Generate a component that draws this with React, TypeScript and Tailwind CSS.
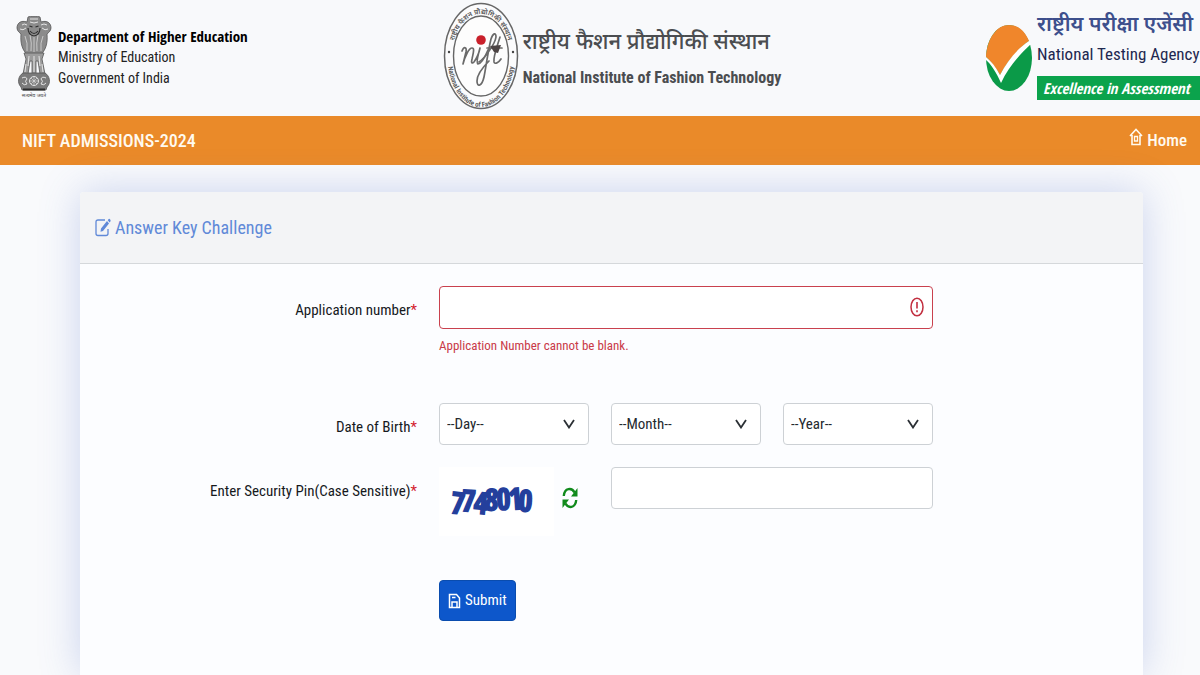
import { useState } from 'react';
import type { ReactNode } from 'react';

function Emblem() {
  return (
    <svg viewBox="0 0 36 82" className="h-[82px] w-9 shrink-0" role="img" aria-label="State Emblem of India">
      <g fill="#8b8b8b" stroke="#555" strokeWidth="0.8" strokeLinejoin="round">
        <path d="M12 1 C14 0 22 0 24 1 L25 6 C31 4 35 7 35 12 C35 15 32 17 31 18 C32 28 29 35 25 38 L11 38 C7 35 4 28 5 18 C4 17 1 15 1 12 C1 7 5 4 11 6 Z" />
        <path d="M8 37 L28 37 L26 43 L29 58 L24 58 L22 45 L20 45 L20 58 L16 58 L16 45 L14 45 L12 58 L7 58 L10 43 Z" fill="#9c9c9c" />
        <path d="M7 57 L29 57 C34 60 35 67 31 71 L30 74 L6 74 L5 71 C1 67 2 60 7 57 Z" fill="#7b7b7b" />
      </g>
      <g fill="none" stroke="#e4e4e4" strokeWidth="1">
        <path d="M14 3 L22 3 M14 6 Q18 8 22 6 M6 9 Q8 7 11 9 M25 9 Q28 7 31 9 M4 13 Q7 15 10 12 M32 13 Q29 15 26 12" />
        <path d="M9 20 Q12 27 11 35 M14 19 Q16 27 15 35 M22 19 Q20 27 21 35 M27 20 Q24 27 25 35 M18 20 V36" strokeWidth="0.7" />
        <path d="M10 48 L9 56 M13 40 L12 50 M18 40 V56 M23 40 L24 50 M26 48 L27 56" />
        <circle cx="18" cy="65" r="4.5" />
        <path d="M18 60.500 V69.500 M13.500 65 H22.500 M15 62 L21 68 M21 62 L15 68" strokeWidth="0.6" />
        <path d="M6 62 Q10 60 11 63 Q8 65 11 68 Q8 70 6 67 M30 62 Q26 60 25 63 Q28 65 25 68 Q28 70 30 67" />
      </g>
      <g fill="none" stroke="#2c2c2c" strokeWidth="1.100">
        <path d="M13.500 10 L16.500 11 M22.500 10 L19.500 11 M14 15 Q18 20 22 15 M12 12 Q12 19 18 20 Q24 19 24 12" />
        <path d="M7 73.500 H29" strokeWidth="2" />
      </g>
      <text x="18" y="81" textAnchor="middle" fontSize="5" fill="#444" fontFamily="Noto Sans Devanagari, Noto Sans, sans-serif">सत्यमेव जयते</text>
    </svg>
  );
}

function NiftSeal() {
  return (
    <svg viewBox="0 0 76 108" className="h-[108px] w-[76px] shrink-0" role="img" aria-label="NIFT">
      <defs>
        <path id="seal-top" d="M8.500 57 A29.500 45 0 0 1 67.500 57" />
        <path id="seal-bottom" d="M4.500 56 A33.500 49 0 0 0 71.500 56" />
      </defs>
      <ellipse cx="38" cy="54" rx="36.500" ry="52.500" fill="#fbfbfc" stroke="#666" strokeWidth="1.500" />
      <ellipse cx="38" cy="54" rx="27.500" ry="40" fill="#fdfdfd" stroke="#666" strokeWidth="1.400" />
      <text fontSize="7" fontWeight="600" fill="#555" fontFamily="Noto Sans Devanagari, Noto Sans, sans-serif">
        <textPath href="#seal-top" startOffset="50%" textAnchor="middle">राष्ट्रीय फैशन प्रौद्योगिकी संस्थान</textPath>
      </text>
      <text fontSize="7" fontWeight="600" fill="#555" fontFamily="Roboto Condensed, sans-serif">
        <textPath href="#seal-bottom" startOffset="50%" textAnchor="middle">National Institute of Fashion Technology</textPath>
      </text>
      <circle cx="6" cy="50" r="1.200" fill="#444" />
      <circle cx="70" cy="50" r="1.200" fill="#444" />
      <g fill="none" stroke="#6a6a6a" strokeWidth="1.700" strokeLinecap="round" strokeLinejoin="round">
        <path d="M19 49 C21 44 24 45 23 50 L20 62 C22 54 26 46 29 46 C32 46 30 52 29 57 C28 61 29 62 31 60 C34 56 36 51 37 46 C35 53 33 61 35 62 C38 62 42 55 45 48" />
        <path d="M36 60 C42 56 52 42 53 35 C53 30 50 31 48 37 C45 49 43 65 41 75 C39 84 34 86 34 79 C34 72 41 64 46 59" />
        <path d="M57 35 C54 45 50 55 51 60 C52 63 56 60 58 57 M44 46 H59" />
      </g>
      <path d="M47 44 L58 43 L55 51 L51 50 Z" fill="#4c4444" />
      <circle cx="38" cy="38" r="4.800" fill="#c9202b" />
    </svg>
  );
}

function NtaMark() {
  return (
    <svg viewBox="0 0 48 68" className="h-[68px] w-12 shrink-0" aria-hidden="true">
      <ellipse cx="24" cy="34" rx="23" ry="33" fill="#0b9a48" />
      <path d="M1 33 C2 14 12 1 24 1 C33 1 40 7 44 17 C34 24 22 37 15 51 C10 42 5 37 1 33 Z" fill="#f0862b" />
      <path d="M1 33 C6 37 11 43 15 51 C22 37 33 24 44 17 L46 20 C34 31 23 44 16 59 C11 48 6 40 1 36 Z" fill="#fff" />
    </svg>
  );
}

function Captcha() {
  return (
    <svg viewBox="0 0 115 69" className="h-[69px] w-[115px] shrink-0 bg-white" role="img" aria-label="Security pin">
      <text
        x="11 22 34 45 58 70 79"
        y="46 44 46 43 43 43 44"
        rotate="6 4 6 3 -2 -4 3"
        fontSize="30"
        fontWeight="800"
        fontFamily="Open Sans Condensed, Open Sans, sans-serif"
        fill="#243f9c"
        stroke="#243f9c"
        strokeWidth="1.500"
      >
        7748010
      </text>
    </svg>
  );
}

function Label({ htmlFor, children }: { htmlFor: string; children: ReactNode }) {
  return (
    <label htmlFor={htmlFor} className="col-span-2 pt-3 text-right text-[15px] leading-6 text-[#16191d]">
      {children}
      <span className="text-[#d3222f]">*</span>
    </label>
  );
}

function Picker({ id, label, count, start }: { id: string; label: string; count: number; start: number }) {
  return (
    <div className="relative">
      <select
        id={id}
        aria-label={label}
        className="h-[42px] w-full appearance-none rounded border border-[#cdd1d5] bg-white px-[7px] text-[15px] text-[#24292e]"
      >
        <option>--{label}--</option>
        {Array.from({ length: count }, (_, i) => (
          <option key={i}>{start + i}</option>
        ))}
      </select>
      <svg viewBox="0 0 12 10" className="pointer-events-none absolute top-4 right-[14px] h-[10px] w-3" aria-hidden="true">
        <path d="M1 1 L6 8.500 L11 1" fill="none" stroke="#2b3035" strokeWidth="1.800" />
      </svg>
    </div>
  );
}

export default function App() {
  const [appNo, setAppNo] = useState('');
  return (
    <div className="flex min-h-screen flex-col overflow-hidden bg-[#f9fafc] font-['Roboto_Condensed',Roboto,sans-serif]">
      <header className="flex h-[116px] shrink-0 items-start justify-between bg-[#f8f9fb]">
        <div className="flex flex-1 gap-[6px] pt-4 pl-4">
          <Emblem />
          <div className="pt-[10px] text-sm leading-[21px] whitespace-nowrap text-[#222]">
            <p className="font-['Open_Sans_Condensed','Open_Sans',sans-serif] text-[15px] leading-[21px] font-bold text-black">
              Department of Higher Education
            </p>
            <p>Ministry of Education</p>
            <p>Government of India</p>
          </div>
        </div>
        <div className="flex gap-1 pt-[2px] pl-2 whitespace-nowrap text-[#4b4d50]">
          <NiftSeal />
          <div className="pt-6">
            <p className="font-['Noto_Sans_Devanagari','Noto_Sans',sans-serif] text-[22px] leading-9 font-medium">राष्ट्रीय फैशन प्रौद्योगिकी संस्थान</p>
            <p className="text-base leading-8 font-bold">National Institute of Fashion Technology</p>
          </div>
        </div>
        <div className="flex flex-1 justify-end gap-1 whitespace-nowrap">
          <div className="pt-6">
            <NtaMark />
          </div>
          <div className="w-[163px] pt-3">
            <p className="font-['Noto_Sans_Devanagari','Noto_Sans',sans-serif] text-[21px] leading-7 font-semibold text-[#3d4f8c]">राष्ट्रीय परीक्षा एजेंसी</p>
            <p className="text-[17px] leading-7 text-[#1e2850]">National Testing Agency</p>
            <p className="mt-2 bg-[#0ba34c] pl-[6px] font-['Open_Sans_Condensed','Open_Sans',sans-serif] text-[15px] leading-6 font-bold text-white italic">
              Excellence in Assessment
            </p>
          </div>
        </div>
      </header>

      <nav className="flex h-[49px] shrink-0 items-center justify-between bg-[#ea8a29] pr-[13px] pl-[22px] text-[#fffaf0]">
        <h1 className="text-lg font-medium">NIFT ADMISSIONS-2024</h1>
        <a href="#home" className="flex items-center gap-1 text-[17px] font-medium">
          <svg viewBox="0 0 14 18" className="mb-2 h-[18px] w-[14px]" aria-hidden="true">
            <path d="M1 8 L7 1.500 L13 8 M3 7 V16.500 H11 V7" fill="none" stroke="currentColor" strokeWidth="1.600" />
            <path d="M5.500 8.500 H8.500 V13 H5.500 Z" fill="none" stroke="currentColor" strokeWidth="1.300" />
          </svg>
          Home
        </a>
      </nav>

      <main className="mt-[27px] mr-[57px] ml-20 flex-1 rounded-t bg-[#fcfdff] shadow-[0_0_40px_rgba(82,112,200,0.28)]">
        <h2 className="flex h-[72px] items-center gap-1 rounded-t border-b border-[#d5d8db] bg-[#f3f4f6] pl-[15px] text-lg text-[#6089d8]">
          <svg viewBox="0 0 16 19" className="h-[19px] w-4" aria-hidden="true">
            <path d="M10 2 H3 Q1 2 1 4 V15.500 Q1 17.500 3 17.500 H11 Q13 17.500 13 15.500 V11" fill="none" stroke="currentColor" strokeWidth="1.300" />
            <path d="M6 10.500 L12 3 L14 5.500 L8 13 L5.500 13.800 Z M12.700 2.200 L13.700 1 Q14.500 0.500 15.200 1.500 Q16 2.500 15.400 3.400 L14.600 4.600 Z" fill="currentColor" />
          </svg>
          Answer Key Challenge
        </h2>

        <form className="pt-[22px] pr-[38px] pb-[54px] pl-[15px]" onSubmit={(e) => e.preventDefault()}>
          <div className="grid grid-cols-6 gap-x-[22px]">
            <Label htmlFor="application-number">Application number</Label>
            <div className="col-span-3 h-[117px]">
              <div className="relative">
                <input
                  id="application-number"
                  value={appNo}
                  onChange={(e) => setAppNo(e.target.value)}
                  aria-invalid="true"
                  aria-describedby="application-number-error"
                  className="block h-[43px] w-full rounded border border-[#c9414e] bg-white pr-9 pl-2 text-base outline-none"
                />
                <svg viewBox="0 0 14 20" className="pointer-events-none absolute top-[11px] right-[9px] h-5 w-[14px]" aria-hidden="true">
                  <ellipse cx="7" cy="10" rx="6" ry="8.800" fill="none" stroke="#c22f40" strokeWidth="1.500" />
                  <path d="M7 5 V11.500 M7 13.300 V15.300" stroke="#c22f40" strokeWidth="1.600" />
                </svg>
              </div>
              <p id="application-number-error" className="pt-[5px] text-[13px] leading-6 text-[#c93a48]">
                Application Number cannot be blank.
              </p>
            </div>
          </div>

          <div className="grid h-16 grid-cols-6 gap-x-[22px]">
            <Label htmlFor="birth-day">Date of Birth</Label>
            <Picker id="birth-day" label="Day" count={31} start={1} />
            <Picker id="birth-month" label="Month" count={12} start={1} />
            <Picker id="birth-year" label="Year" count={60} start={1950} />
          </div>

          <div className="grid h-[113px] grid-cols-6 gap-x-[22px]">
            <Label htmlFor="security-pin">Enter Security Pin(Case Sensitive)</Label>
            <div className="flex items-start gap-2">
              <Captcha />
              <button type="button" aria-label="Refresh security pin" className="mt-5 shrink-0 text-[#118a1c]">
                <svg viewBox="0 0 16 22" className="h-[22px] w-4" aria-hidden="true">
                  <path d="M1.800 9 C2.500 0.500 10 0.500 12.500 5.500 M14.200 13 C13.500 21.500 6 21.500 3.500 16.500" fill="none" stroke="currentColor" strokeWidth="2.400" />
                  <path d="M15.500 1 V9.500 H9 Z M0.500 21 V12.500 H7 Z" fill="currentColor" />
                </svg>
              </button>
            </div>
            <input
              id="security-pin"
              className="col-span-2 h-[42px] w-full rounded border border-[#cdd1d5] bg-white px-2 text-base outline-none"
            />
          </div>

          <div className="grid grid-cols-6 gap-x-[22px]">
            <div className="col-start-3">
              <button
                type="submit"
                className="flex h-[41px] items-center gap-1 rounded border border-[#0a4cae] bg-[#0d57cb] px-2 text-[15px] text-white"
              >
                <svg viewBox="0 0 13 16" className="h-4 w-[13px]" aria-hidden="true">
                  <path d="M1.500 1.500 H8.500 L11.500 5 V14.500 H1.500 Z M4 14 V9 H9 V14 M4 4.500 H7.500" fill="none" stroke="currentColor" strokeWidth="1.500" />
                </svg>
                Submit
              </button>
            </div>
          </div>
        </form>
      </main>
    </div>
  );
}
